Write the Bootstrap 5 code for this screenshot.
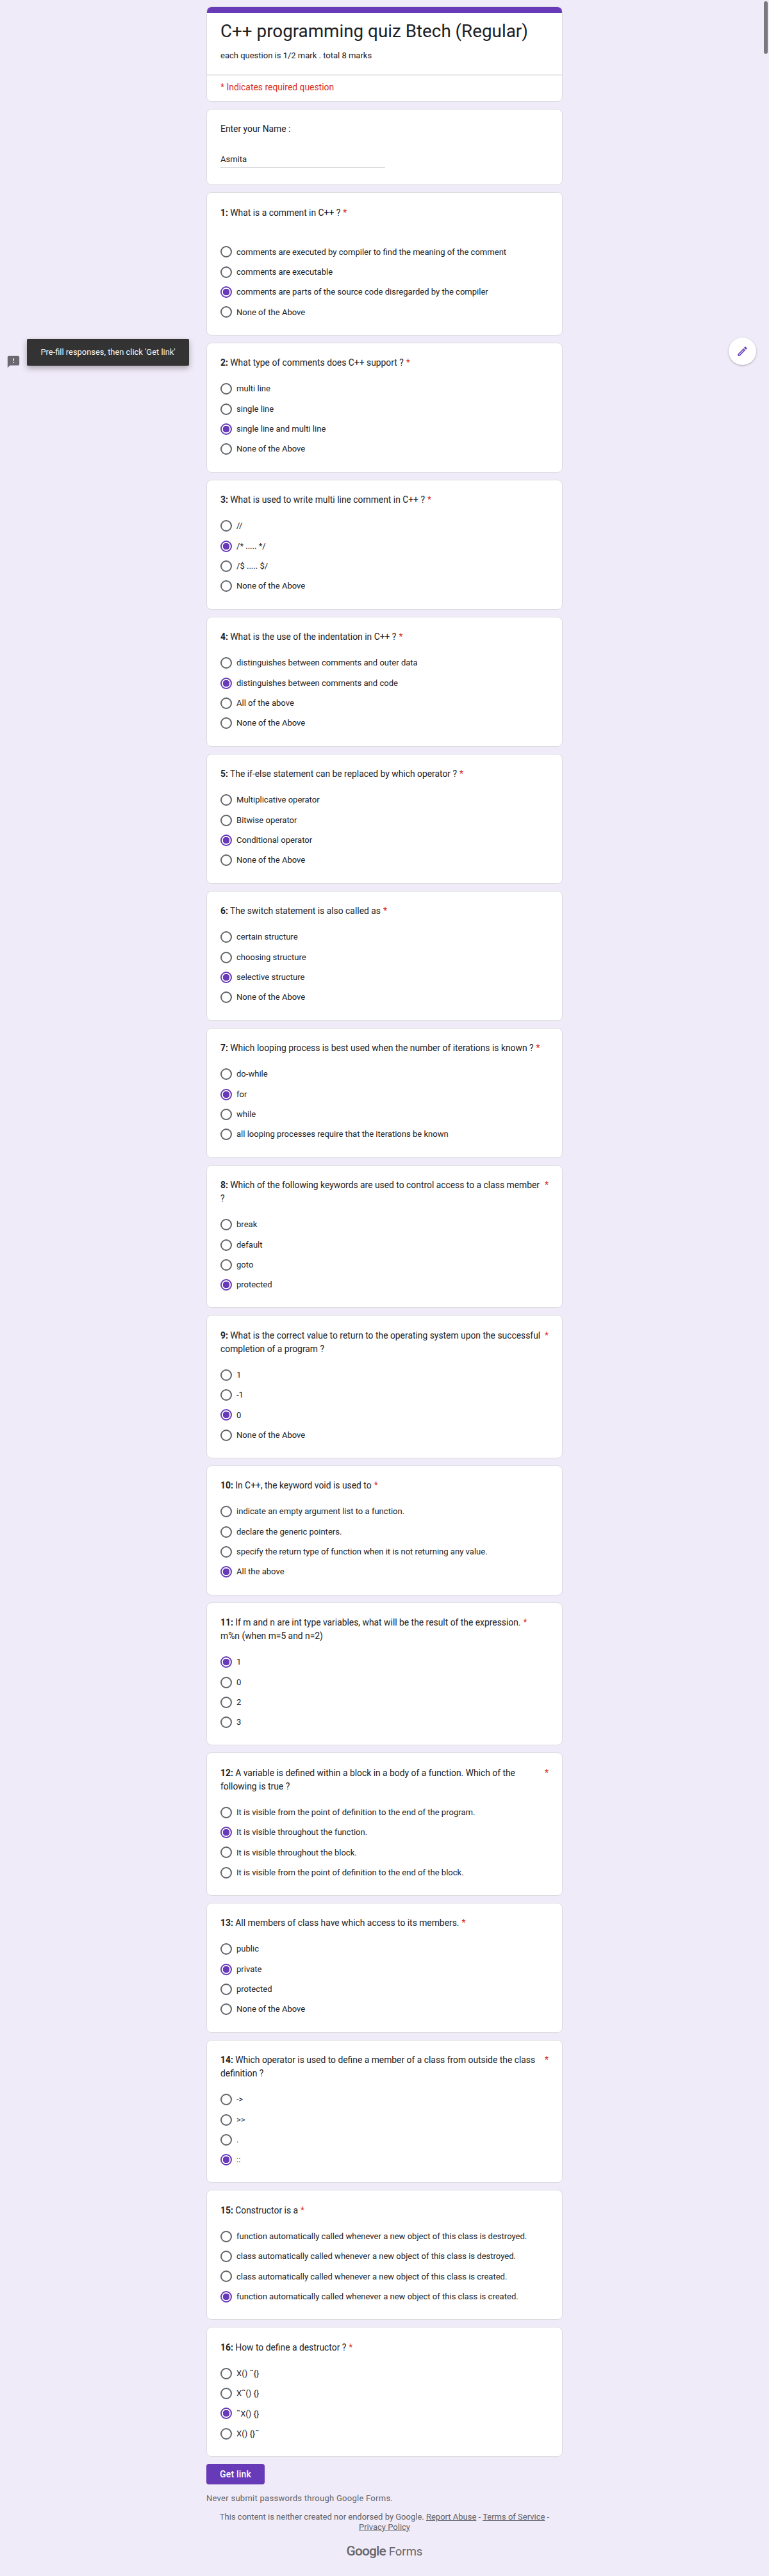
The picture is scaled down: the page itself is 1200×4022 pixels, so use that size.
<!doctype html>
<html lang="en"><head><meta charset="utf-8"><title>C++ programming quiz Btech (Regular)</title>
<link href="https://cdn.jsdelivr.net/npm/bootstrap@5.3.0/dist/css/bootstrap.min.css" rel="stylesheet">
<style>
html,body{height:4022px;overflow:hidden}
body{background:#f0ebf8;font-family:Roboto,"Liberation Sans",sans-serif;color:#202124;position:relative;margin:0}
.sheet{width:556px;padding-top:10px;margin-left:322px}
.fcard{border:1px solid #dadce0;border-radius:8px;background:#fff;margin-bottom:11px;padding:0 21px;overflow:hidden}
.headcard{height:148.6px;padding:0}
.topband{height:9px;flex:none;background:#673ab7}
.htitle{font-size:27.8px;line-height:36px;margin:11px 21px 0;font-weight:400}
.hdesc{font-size:13px;line-height:18px;margin:11px 21px 0}
.hsep{border-top:2px solid #e8e8ea;margin-top:20px}
.hreq{font-size:13.9px;line-height:18px;color:#d93025;margin:9px 21px 0}
.qtitle{font-size:13.87px;line-height:21px;margin:0}
.qtext{flex:1 1 auto;white-space:nowrap}
.qstar{color:#d93025;margin-left:4px;flex:none}
.qtext + .qstar{margin-left:0}
.qtitle b{font-weight:700}
.optrow{display:flex;align-items:center;height:31.3px;font-size:13.05px;margin:0;padding:0}
.form-check-input.rdo{width:18px;height:18px;margin:0 7px 0 0;float:none;flex:none;border:2px solid #5f6368;background:#fff;box-shadow:none}
.form-check-input.rdo:checked{border-color:#673ab7;background:radial-gradient(circle,#673ab7 0,#673ab7 5px,#fff 5.5px)}
.qone{height:203px;padding-top:20.500px}
.qtwo{height:223.500px;padding-top:20.500px}
.qone .opts,.qtwo .opts{margin-top:14.500px}
.qfirst{height:223.300px;padding-top:20.500px}
.qfirst .opts{margin-top:35px}
.namecard{height:119.700px;padding-top:20.500px}
.nameval{font-size:13px;line-height:18px;margin-top:27.500px;padding-bottom:3px;width:257px;border-bottom:1px solid #dadce0}
.getbtn{width:91px;height:32px;background:#673ab7;color:#fff;font-size:14px;font-weight:500;letter-spacing:.2px;border:0;border-radius:4px;padding:0;display:block}
.getbtn:hover{background:#673ab7;color:#fff}
.neversub{font-size:13px;line-height:18px;color:#5f6368;margin:13px 0 0;letter-spacing:.27px}
.legal{font-size:13px;line-height:15.500px;color:#5f6368;text-align:center;margin:12px 0 0;padding:0 10px}
.legal a{color:#5f6368}
.gbrand{text-align:center;color:#66666b;margin-top:16px;line-height:28px}
.gbrand .gword{font-size:21px;font-weight:500;letter-spacing:-.9px}
.gbrand .fword{font-size:18.500px;margin-left:1px}
.tipbox{position:absolute;left:42px;top:529px;width:253px;height:42px;background:#333;border-radius:2px;color:#f5f5f5;font-size:12.9px;display:flex;align-items:center;justify-content:center;box-shadow:0 4px 10px rgba(0,0,0,.3)}
.fbicon{position:absolute;left:10px;top:554px}
.fabpen{position:absolute;left:1137px;top:527px;width:43px;height:43px;border-radius:50%;background:#fff;box-shadow:0 1px 3px rgba(60,64,67,.4);display:flex;align-items:center;justify-content:center}
.sbar{position:absolute;left:1192px;top:2px;width:6px;height:82px;border-radius:3px;background:#7b7980}
</style></head><body>
<main class="sheet">
<section class="card fcard headcard"><div class="topband"></div>
<h1 class="htitle">C++ programming quiz Btech (Regular)</h1>
<p class="hdesc">each question is 1/2 mark . total 8 marks</p>
<div class="hsep"></div>
<p class="hreq">* Indicates required question</p></section>

<section class="card fcard namecard"><p class="qtitle">Enter your Name :</p><div class="nameval">Asmita</div></section>

<section class="card fcard qfirst"><div class="qtitle d-flex"><span><b>1:</b> What is a comment in C++ ?</span><span class="qstar">*</span></div><div class="opts">
<label class="optrow"><input class="form-check-input rdo" type="radio" name="q1">comments are executed by compiler to find the meaning of the comment</label>
<label class="optrow"><input class="form-check-input rdo" type="radio" name="q1">comments are executable</label>
<label class="optrow"><input class="form-check-input rdo" type="radio" name="q1" checked>comments are parts of the source code disregarded by the compiler</label>
<label class="optrow"><input class="form-check-input rdo" type="radio" name="q1">None of the Above</label></div></section>

<section class="card fcard qone"><div class="qtitle d-flex"><span><b>2:</b> What type of comments does C++ support ?</span><span class="qstar">*</span></div><div class="opts">
<label class="optrow"><input class="form-check-input rdo" type="radio" name="q2">multi line</label>
<label class="optrow"><input class="form-check-input rdo" type="radio" name="q2">single line</label>
<label class="optrow"><input class="form-check-input rdo" type="radio" name="q2" checked>single line and multi line</label>
<label class="optrow"><input class="form-check-input rdo" type="radio" name="q2">None of the Above</label></div></section>

<section class="card fcard qone"><div class="qtitle d-flex"><span><b>3:</b> What is used to write multi line comment in C++ ?</span><span class="qstar">*</span></div><div class="opts">
<label class="optrow"><input class="form-check-input rdo" type="radio" name="q3">//</label>
<label class="optrow"><input class="form-check-input rdo" type="radio" name="q3" checked>/* ..... */</label>
<label class="optrow"><input class="form-check-input rdo" type="radio" name="q3">/$ ..... $/</label>
<label class="optrow"><input class="form-check-input rdo" type="radio" name="q3">None of the Above</label></div></section>

<section class="card fcard qone"><div class="qtitle d-flex"><span><b>4:</b> What is the use of the indentation in C++ ?</span><span class="qstar">*</span></div><div class="opts">
<label class="optrow"><input class="form-check-input rdo" type="radio" name="q4">distinguishes between comments and outer data</label>
<label class="optrow"><input class="form-check-input rdo" type="radio" name="q4" checked>distinguishes between comments and code</label>
<label class="optrow"><input class="form-check-input rdo" type="radio" name="q4">All of the above</label>
<label class="optrow"><input class="form-check-input rdo" type="radio" name="q4">None of the Above</label></div></section>

<section class="card fcard qone"><div class="qtitle d-flex"><span><b>5:</b> The if-else statement can be replaced by which operator ?</span><span class="qstar">*</span></div><div class="opts">
<label class="optrow"><input class="form-check-input rdo" type="radio" name="q5">Multiplicative operator</label>
<label class="optrow"><input class="form-check-input rdo" type="radio" name="q5">Bitwise operator</label>
<label class="optrow"><input class="form-check-input rdo" type="radio" name="q5" checked>Conditional operator</label>
<label class="optrow"><input class="form-check-input rdo" type="radio" name="q5">None of the Above</label></div></section>

<section class="card fcard qone"><div class="qtitle d-flex"><span><b>6:</b> The switch statement is also called as</span><span class="qstar">*</span></div><div class="opts">
<label class="optrow"><input class="form-check-input rdo" type="radio" name="q6">certain structure</label>
<label class="optrow"><input class="form-check-input rdo" type="radio" name="q6">choosing structure</label>
<label class="optrow"><input class="form-check-input rdo" type="radio" name="q6" checked>selective structure</label>
<label class="optrow"><input class="form-check-input rdo" type="radio" name="q6">None of the Above</label></div></section>

<section class="card fcard qone"><div class="qtitle d-flex"><span><b>7:</b> Which looping process is best used when the number of iterations is known ?</span><span class="qstar">*</span></div><div class="opts">
<label class="optrow"><input class="form-check-input rdo" type="radio" name="q7">do-while</label>
<label class="optrow"><input class="form-check-input rdo" type="radio" name="q7" checked>for</label>
<label class="optrow"><input class="form-check-input rdo" type="radio" name="q7">while</label>
<label class="optrow"><input class="form-check-input rdo" type="radio" name="q7">all looping processes require that the iterations be known</label></div></section>

<section class="card fcard qtwo"><div class="qtitle d-flex"><span class="qtext"><b>8:</b> Which of the following keywords are used to control access to a class member<br>?</span><span class="qstar">*</span></div><div class="opts">
<label class="optrow"><input class="form-check-input rdo" type="radio" name="q8">break</label>
<label class="optrow"><input class="form-check-input rdo" type="radio" name="q8">default</label>
<label class="optrow"><input class="form-check-input rdo" type="radio" name="q8">goto</label>
<label class="optrow"><input class="form-check-input rdo" type="radio" name="q8" checked>protected</label></div></section>

<section class="card fcard qtwo"><div class="qtitle d-flex"><span class="qtext"><b>9:</b> What is the correct value to return to the operating system upon the successful<br>completion of a program ?</span><span class="qstar">*</span></div><div class="opts">
<label class="optrow"><input class="form-check-input rdo" type="radio" name="q9">1</label>
<label class="optrow"><input class="form-check-input rdo" type="radio" name="q9">-1</label>
<label class="optrow"><input class="form-check-input rdo" type="radio" name="q9" checked>0</label>
<label class="optrow"><input class="form-check-input rdo" type="radio" name="q9">None of the Above</label></div></section>

<section class="card fcard qone"><div class="qtitle d-flex"><span><b>10:</b> In C++, the keyword void is used to</span><span class="qstar">*</span></div><div class="opts">
<label class="optrow"><input class="form-check-input rdo" type="radio" name="q10">indicate an empty argument list to a function.</label>
<label class="optrow"><input class="form-check-input rdo" type="radio" name="q10">declare the generic pointers.</label>
<label class="optrow"><input class="form-check-input rdo" type="radio" name="q10">specify the return type of function when it is not returning any value.</label>
<label class="optrow"><input class="form-check-input rdo" type="radio" name="q10" checked>All the above</label></div></section>

<section class="card fcard qtwo"><div class="qtitle d-flex"><span><b>11:</b> If m and n are int type variables, what will be the result of the expression.<br>m%n (when m=5 and n=2)</span><span class="qstar">*</span></div><div class="opts">
<label class="optrow"><input class="form-check-input rdo" type="radio" name="q11" checked>1</label>
<label class="optrow"><input class="form-check-input rdo" type="radio" name="q11">0</label>
<label class="optrow"><input class="form-check-input rdo" type="radio" name="q11">2</label>
<label class="optrow"><input class="form-check-input rdo" type="radio" name="q11">3</label></div></section>

<section class="card fcard qtwo"><div class="qtitle d-flex"><span class="qtext"><b>12:</b> A variable is defined within a block in a body of a function. Which of the<br>following is true ?</span><span class="qstar">*</span></div><div class="opts">
<label class="optrow"><input class="form-check-input rdo" type="radio" name="q12">It is visible from the point of definition to the end of the program.</label>
<label class="optrow"><input class="form-check-input rdo" type="radio" name="q12" checked>It is visible throughout the function.</label>
<label class="optrow"><input class="form-check-input rdo" type="radio" name="q12">It is visible throughout the block.</label>
<label class="optrow"><input class="form-check-input rdo" type="radio" name="q12">It is visible from the point of definition to the end of the block.</label></div></section>

<section class="card fcard qone"><div class="qtitle d-flex"><span><b>13:</b> All members of class have which access to its members.</span><span class="qstar">*</span></div><div class="opts">
<label class="optrow"><input class="form-check-input rdo" type="radio" name="q13">public</label>
<label class="optrow"><input class="form-check-input rdo" type="radio" name="q13" checked>private</label>
<label class="optrow"><input class="form-check-input rdo" type="radio" name="q13">protected</label>
<label class="optrow"><input class="form-check-input rdo" type="radio" name="q13">None of the Above</label></div></section>

<section class="card fcard qtwo"><div class="qtitle d-flex"><span class="qtext"><b>14:</b> Which operator is used to define a member of a class from outside the class<br>definition ?</span><span class="qstar">*</span></div><div class="opts">
<label class="optrow"><input class="form-check-input rdo" type="radio" name="q14">-&gt;</label>
<label class="optrow"><input class="form-check-input rdo" type="radio" name="q14">&gt;&gt;</label>
<label class="optrow"><input class="form-check-input rdo" type="radio" name="q14">.</label>
<label class="optrow"><input class="form-check-input rdo" type="radio" name="q14" checked>::</label></div></section>

<section class="card fcard qone"><div class="qtitle d-flex"><span><b>15:</b> Constructor is a</span><span class="qstar">*</span></div><div class="opts">
<label class="optrow"><input class="form-check-input rdo" type="radio" name="q15">function automatically called whenever a new object of this class is destroyed.</label>
<label class="optrow"><input class="form-check-input rdo" type="radio" name="q15">class automatically called whenever a new object of this class is destroyed.</label>
<label class="optrow"><input class="form-check-input rdo" type="radio" name="q15">class automatically called whenever a new object of this class is created.</label>
<label class="optrow"><input class="form-check-input rdo" type="radio" name="q15" checked>function automatically called whenever a new object of this class is created.</label></div></section>

<section class="card fcard qone"><div class="qtitle d-flex"><span><b>16:</b> How to define a destructor ?</span><span class="qstar">*</span></div><div class="opts">
<label class="optrow"><input class="form-check-input rdo" type="radio" name="q16">X() ˜{}</label>
<label class="optrow"><input class="form-check-input rdo" type="radio" name="q16">X˜() {}</label>
<label class="optrow"><input class="form-check-input rdo" type="radio" name="q16" checked>˜X() {}</label>
<label class="optrow"><input class="form-check-input rdo" type="radio" name="q16">X() {}˜</label></div></section>

<button type="button" class="btn getbtn">Get link</button>
<p class="neversub">Never submit passwords through Google Forms.</p>
<p class="legal">This content is neither created nor endorsed by Google. <a href="#">Report Abuse</a> - <a href="#">Terms of Service</a> - <a href="#">Privacy Policy</a></p>
<div class="gbrand"><span class="gword">Google</span> <span class="fword">Forms</span></div>
</main>
<div class="tipbox">Pre-fill responses, then click 'Get link'</div>
<svg class="fbicon" width="22" height="22" viewBox="0 0 24 24" fill="#6b6870" aria-hidden="true"><path d="M20 2H4c-1.100 0-2 .9-2 2v18l4-4h14c1.100 0 2-.9 2-2V4c0-1.100-.9-2-2-2zm-7 12h-2v-2h2v2zm0-4h-2V6h2v4z"/></svg>
<div class="fabpen"><svg width="19" height="19" viewBox="0 0 24 24" fill="#673ab7" aria-hidden="true"><path d="M3 17.250V21h3.750L17.810 9.940l-3.750-3.750L3 17.250zM5.920 19H5v-.92l9.060-9.060.92.92L5.920 19zM20.710 7.040a1 1 0 0 0 0-1.410l-2.340-2.340a1 1 0 0 0-1.410 0l-1.830 1.830 3.750 3.750 1.830-1.830z"/></svg></div>
<div class="sbar"></div>
<script src="https://cdn.jsdelivr.net/npm/bootstrap@5.3.0/dist/js/bootstrap.bundle.min.js"></script>
</body></html>
